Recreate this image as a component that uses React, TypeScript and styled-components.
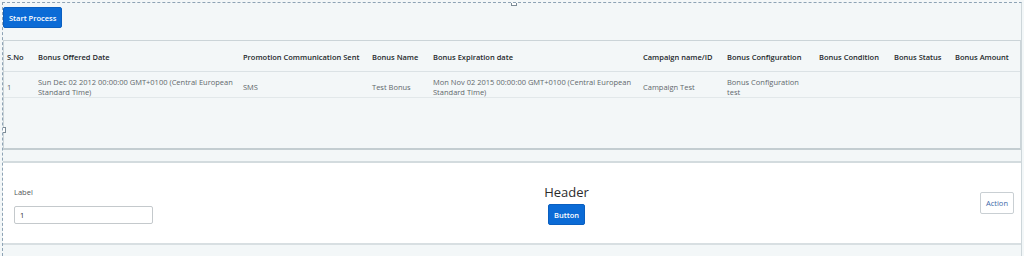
import styled, { createGlobalStyle } from 'styled-components';

const GlobalStyle = createGlobalStyle`
  html, body {
    margin: 0;
    padding: 0;
    background: #f3f7f8;
    font-family: "Open Sans", "Noto Sans", sans-serif;
  }
`;

type Column = { key: string; title: string; width?: number };

const columns: Column[] = [
  { key: 'sno', title: 'S.No', width: 31 },
  { key: 'offered', title: 'Bonus Offered Date', width: 205 },
  { key: 'promo', title: 'Promotion Communication Sent', width: 129 },
  { key: 'name', title: 'Bonus Name', width: 61 },
  { key: 'expiration', title: 'Bonus Expiration date', width: 210 },
  { key: 'campaign', title: 'Campaign name/ID', width: 84 },
  { key: 'config', title: 'Bonus Configuration', width: 92 },
  { key: 'condition', title: 'Bonus Condition', width: 75 },
  { key: 'status', title: 'Bonus Status', width: 61 },
  { key: 'amount', title: 'Bonus Amount' }
];

const rows: Record<string, string>[] = [
  {
    sno: '1',
    offered: 'Sun Dec 02 2012 00:00:00 GMT+0100 (Central European Standard Time)',
    promo: 'SMS',
    name: 'Test Bonus',
    expiration: 'Mon Nov 02 2015 00:00:00 GMT+0100 (Central European Standard Time)',
    campaign: 'Campaign Test',
    config: 'Bonus Configuration test',
    condition: '',
    status: '',
    amount: ''
  }
];

const App = () => {
  return (
    <>
      <GlobalStyle />
      <Canvas>
        <Handle $side="top" />
        <Handle $side="left" />
        <Toolbar>
          <PrimaryButton>Start Process</PrimaryButton>
        </Toolbar>
        <TableCard>
          <Table>
            <colgroup>
              {columns.map((c) => (
                <col key={c.key} style={c.width ? { width: c.width } : undefined} />
              ))}
            </colgroup>
            <thead>
              <tr>
                {columns.map((c) => (
                  <HeadCell key={c.key}>{c.title}</HeadCell>
                ))}
              </tr>
            </thead>
            <tbody>
              {rows.map((row) => (
                <tr key={row.sno}>
                  {columns.map((c) => (
                    <BodyCell key={c.key}>{row[c.key]}</BodyCell>
                  ))}
                </tr>
              ))}
            </tbody>
          </Table>
        </TableCard>
        <Panel>
          <Field>
            <FieldLabel>Label</FieldLabel>
            <TextInput defaultValue="1" />
          </Field>
          <Center>
            <PanelTitle>Header</PanelTitle>
            <PrimaryButton>Button</PrimaryButton>
          </Center>
          <GhostButton>Action</GhostButton>
        </Panel>
      </Canvas>
    </>
  );
};

const Canvas = styled.div`
  position: relative;
  box-sizing: border-box;
  margin: 2px 2px 0 2px;
  width: 1020px;
  height: 254px;
  border: 1px dashed #8ea3b5;
  border-bottom: none;
  border-right: 1px solid #cdd6da;
  padding: 4px 0 0 0;
  overflow: hidden;
`;

const Handle = styled.div<{ $side: 'top' | 'left' }>`
  position: absolute;
  width: 4px;
  height: 4px;
  border: 1px solid #7c8b96;
  background: #fff;
  ${({ $side }) =>
    $side === 'top' ? 'top: -3px; left: 508px;' : 'left: -3px; top: 124px;'}
`;

const Toolbar = styled.div`
  display: flex;
  height: 21px;
`;

const PrimaryButton = styled.button`
  box-sizing: border-box;
  height: 21px;
  padding: 0 5px;
  background: #0b6bd6;
  border: 1px solid #0a5fc0;
  border-radius: 2px;
  color: #fff;
  font-family: "Open Sans", "Noto Sans", sans-serif;
  font-weight: 600;
  font-size: 7.5px;
  cursor: pointer;
`;

const TableCard = styled.div`
  box-sizing: border-box;
  margin-top: 12px;
  height: 110px;
  border: 1px solid #cbd4d8;
  border-bottom: 2px solid #c3cdd1;
  background: #f3f7f8;
`;

const Table = styled.table`
  width: 100%;
  border-collapse: collapse;
  table-layout: fixed;
  font-size: 7.5px;
`;

const HeadCell = styled.th`
  height: 28px;
  padding: 2px 3px 0;
  text-align: left;
  font-weight: 600;
  color: #25292c;
  border-bottom: 1px solid #dbe2e5;
  white-space: nowrap;
`;

const BodyCell = styled.td`
  height: 21px;
  padding: 4px 3px 0;
  color: #62686c;
  line-height: 10px;
  border-bottom: 1px solid #e2e8ea;
  vertical-align: middle;
`;

const Panel = styled.div`
  box-sizing: border-box;
  margin-top: 11px;
  height: 84px;
  background: #fff;
  border-top: 2px solid #d3dbde;
  border-bottom: 2px solid #d8dfe2;
  display: flex;
  justify-content: space-between;
  align-items: center;
  padding: 0 7px 0 11px;
`;

const Field = styled.div`
  display: flex;
  flex-direction: column;
  gap: 8px;
  margin-top: 5px;
`;

const FieldLabel = styled.label`
  font-size: 7.5px;
  line-height: 11px;
  color: #505558;
`;

const TextInput = styled.input`
  box-sizing: border-box;
  width: 139px;
  height: 18px;
  border: 1px solid #c4c9cc;
  border-radius: 2px;
  padding: 0 5px;
  font-family: "Open Sans", "Noto Sans", sans-serif;
  font-size: 7.5px;
  color: #333;
`;

const Center = styled.div`
  display: flex;
  flex-direction: column;
  align-items: center;
  gap: 4px;
  margin-top: 3px;
`;

const PanelTitle = styled.div`
  font-size: 13px;
  color: #2c2c2c;
  line-height: 16px;
`;

const GhostButton = styled.button`
  box-sizing: border-box;
  height: 22px;
  padding: 0 5px;
  background: #fff;
  border: 1px solid #c9cfd3;
  border-radius: 2px;
  color: #3c68a8;
  font-family: "Open Sans", "Noto Sans", sans-serif;
  font-size: 7.5px;
  cursor: pointer;
`;

export default App;
